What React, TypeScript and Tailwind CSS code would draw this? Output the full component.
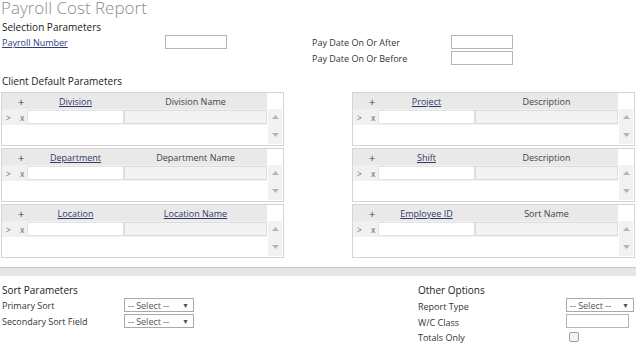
import React from "react";

type GridProps = { col1: string; col2: string; col2Link?: boolean };

function Arrow({ up }: { up?: boolean }) {
  return (
    <svg width="7" height="4" viewBox="0 0 7 4" className="block">
      {up ? <polygon points="0,4 7,4 3.5,0" fill="#b5b5b5" /> : <polygon points="0,0 7,0 3.5,4" fill="#b5b5b5" />}
    </svg>
  );
}

function LookupGrid({ col1, col2, col2Link = false }: GridProps) {
  return (
    <div className="flex h-[54px] border border-[#d4d4d4] bg-white">
      <div className="flex flex-1 flex-col">
        <div className="grid h-[16px] grid-cols-[25px_97px_1fr] items-center bg-[#e9e9e9] text-[#444]">
          <span className="pl-[16px] text-[11px] leading-none">+</span>
          <span className="text-center text-[#333a6a] underline">{col1}</span>
          <span className={col2Link ? "text-center text-[#333a6a] underline" : "text-center"}>{col2}</span>
        </div>
        <div className="grid h-[16px] grid-cols-[25px_97px_1fr] items-stretch bg-[#f1f1f1] py-[1px]">
          <span className="flex items-center gap-[9px] pl-[4px] text-[8.5px] text-[#666]">
            <span>&gt;</span>
            <span>x</span>
          </span>
          <span className="border border-[#e2e2e2] bg-white" />
          <span className="border border-[#dcdcdc] bg-[#f3f3f3]" />
        </div>
      </div>
      <div className="flex w-[16px] flex-col">
        <div className="h-[16px] bg-white" />
        <div className="mx-[1px] mb-[1px] flex flex-1 flex-col items-center justify-between bg-[#f2f2f2] pb-[7px] pt-[6px]">
          <Arrow up />
          <Arrow />
        </div>
      </div>
    </div>
  );
}

function SelectBox({ width }: { width: string }) {
  return (
    <div className={`${width} flex h-[14px] items-center justify-between border border-[#a9a9a9] bg-white pl-[3px] pr-[4px] text-[#555]`}>
      <span>-- Select --</span>
      <span className="text-[7px]">▼</span>
    </div>
  );
}

export default function App() {
  return (
    <div className="h-[346px] w-[636px] overflow-hidden bg-white text-[9px] leading-[13px] text-[#333]" style={{ fontFamily: "'Open Sans', 'Liberation Sans', sans-serif" }}>
      <h1 className="-mt-[3px] mb-[1px] pl-[1px] text-[17px] font-light leading-[22px] text-[#8c8c8c]">Payroll Cost Report</h1>
      <div className="pl-[2px] text-[10px] leading-[14px] text-[#222]">Selection Parameters</div>

      <div className="mt-[1px] grid grid-cols-[163px_147px_139px_1fr] pl-[2px]">
        <a className="pt-[1px] text-[#333a7a] underline">Payroll Number</a>
        <div className="h-[14px] w-[62px] border border-[#b5b5b5] bg-white" />
        <div className="flex flex-col">
          <span className="flex h-[15px] items-center">Pay Date On Or After</span>
          <span className="flex h-[16px] items-center">Pay Date On Or Before</span>
        </div>
        <div className="flex flex-col gap-[2px]">
          <div className="h-[14px] w-[62px] border border-[#b5b5b5] bg-white" />
          <div className="h-[14px] w-[62px] border border-[#b5b5b5] bg-white" />
        </div>
      </div>

      <div className="mt-[8px] pl-[2px] text-[10px] leading-[14px] text-[#222]">Client Default Parameters</div>

      <div className="mt-[4px] grid grid-cols-[283px_283px] justify-between pl-[1px] pr-[1px]">
        <div className="flex flex-col gap-[2px]">
          <LookupGrid col1="Division" col2="Division Name" />
          <LookupGrid col1="Department" col2="Department Name" />
          <LookupGrid col1="Location" col2="Location Name" col2Link />
        </div>
        <div className="flex flex-col gap-[2px]">
          <LookupGrid col1="Project" col2="Description" />
          <LookupGrid col1="Shift" col2="Description" />
          <LookupGrid col1="Employee ID" col2="Sort Name" />
        </div>
      </div>

      <div className="mt-[9px] h-[9px] border-t border-[#c8c8c8] bg-[#e6e6e6]" />

      <div className="mt-[7px] grid grid-cols-[418px_1fr]">
        <div className="pl-[2px]">
          <div className="text-[10px] leading-[14px] text-[#222]">Sort Parameters</div>
          <div className="grid grid-cols-[122px_1fr] grid-rows-[16px_16px] items-center">
            <span>Primary Sort</span>
            <SelectBox width="w-[70px]" />
            <span>Secondary Sort Field</span>
            <SelectBox width="w-[70px]" />
          </div>
        </div>
        <div>
          <div className="text-[10px] leading-[14px] text-[#222]">Other Options</div>
          <div className="grid grid-cols-[148px_1fr] grid-rows-[16px_16px_16px] items-center">
            <span className="pt-[3px]">Report Type</span>
            <SelectBox width="w-[68px]" />
            <span className="pt-[2px]">W/C Class</span>
            <div className="h-[14px] w-[63px] border border-[#b5b5b5] bg-white" />
            <span>Totals Only</span>
            <div className="ml-[3px] h-[10px] w-[10px] rounded-[2px] border border-[#a0a0a0] bg-[#f3f3f3]" />
          </div>
        </div>
      </div>
    </div>
  );
}
